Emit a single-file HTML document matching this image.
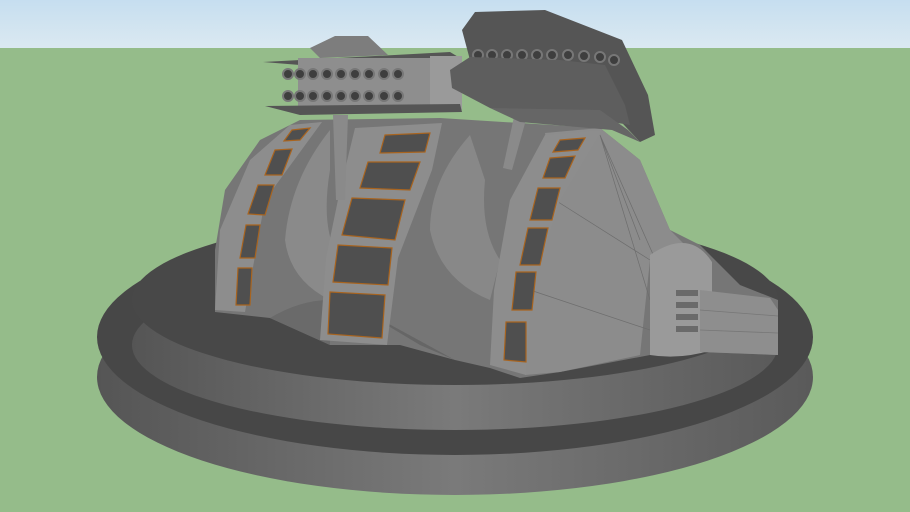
<!DOCTYPE html>
<html><head><style>html,body{margin:0;padding:0;width:910px;height:512px;overflow:hidden}</style></head><body>
<svg width="910" height="512" viewBox="0 0 910 512" xmlns="http://www.w3.org/2000/svg">
<defs>
<linearGradient id="sky" x1="0" y1="0" x2="0" y2="1"><stop offset="0" stop-color="#c6def0"/><stop offset="1" stop-color="#dbe9f1"/></linearGradient>
<linearGradient id="side" x1="0" y1="0" x2="1" y2="0"><stop offset="0" stop-color="#555"/><stop offset=".5" stop-color="#7a7a7a"/><stop offset="1" stop-color="#5a5a5a"/></linearGradient>
</defs>
<rect width="910" height="49" fill="url(#sky)"/>
<rect y="48" width="910" height="464" fill="#95bc8a"/>
<!-- base -->
<ellipse cx="455" cy="377" rx="358" ry="118" fill="url(#side)"/>
<ellipse cx="455" cy="337" rx="358" ry="118" fill="#474747"/>
<ellipse cx="455" cy="345" rx="323" ry="85" fill="url(#side)"/>
<ellipse cx="455" cy="300" rx="323" ry="85" fill="#484848"/>
<!-- body silhouette -->
<polygon points="215,250 225,190 260,140 300,120 440,118 520,123 600,128 640,160 670,230 700,245 740,285 778,300 778,355 700,352 650,355 560,372 520,378 490,368 455,360 400,345 330,345 270,318 215,312" fill="#767676"/>
<!-- arch bulges -->
<path d="M330,130 Q290,180 285,240 Q290,280 330,300 L340,260 Q320,230 330,170 Z" fill="#8a8a8a"/>
<path d="M470,135 Q430,180 430,230 Q440,280 490,300 L500,260 Q480,230 485,180 Z" fill="#888"/>
<path d="M345,300 Q400,330 455,360 L420,345 Z" fill="#666"/>
<path d="M270,318 Q300,300 330,300 L330,345 Z" fill="#6a6a6a"/>
<!-- right cone -->
<polygon points="545,133 600,128 640,160 670,230 690,250 650,260 640,355 560,372 525,375 530,290 555,200" fill="#8c8c8c"/>
<path d="M600,135 L650,300 M600,135 L640,240 M600,135 L660,270 M555,200 L650,260 M530,290 L650,330" stroke="#6d6d6d" stroke-width="0.7" fill="none"/>
<!-- nozzle -->
<path d="M650,255 Q690,228 712,262 L712,350 Q680,360 650,355 Z" fill="#9a9a9a"/>
<polygon points="700,290 770,298 778,310 778,355 700,352" fill="#8e8e8e"/>
<path d="M700,310 L778,316 M700,330 L778,333" stroke="#777" stroke-width="0.8"/>
<g fill="#6a6a6a"><rect x="676" y="290" width="22" height="6"/><rect x="676" y="302" width="22" height="6"/><rect x="676" y="314" width="22" height="6"/><rect x="676" y="326" width="22" height="6"/></g>
<!-- left frame -->
<polygon points="290,125 322,122 265,200 245,312 215,310 220,230 250,160" fill="#8d8d8d"/>
<g fill="#4f4f4f" stroke="#a8641f" stroke-width="1.2">
<polygon points="292,130 310,128 300,140 284,141"/><polygon points="275,150 292,149 282,175 265,175"/><polygon points="258,185 274,185 265,215 248,214"/><polygon points="246,225 260,225 255,258 240,258"/><polygon points="238,268 252,268 250,305 236,305"/>
</g>
<!-- middle frame -->
<polygon points="355,128 442,123 432,170 398,258 387,345 320,340 326,258 340,190" fill="#8d8d8d"/>
<g fill="#4f4f4f" stroke="#a8641f" stroke-width="1.2">
<polygon points="385,135 430,133 425,152 380,153"/><polygon points="368,162 420,162 410,190 360,188"/><polygon points="352,198 405,200 395,240 342,235"/><polygon points="338,245 392,248 388,285 333,282"/><polygon points="330,292 385,295 382,338 328,334"/>
</g>
<!-- right frame -->
<polygon points="545,135 602,130 560,200 532,290 526,375 490,365 494,290 510,200" fill="#8d8d8d"/>
<g fill="#4f4f4f" stroke="#a8641f" stroke-width="1.2">
<polygon points="560,140 585,138 578,150 553,152"/><polygon points="550,158 575,156 565,178 543,178"/><polygon points="538,188 560,188 552,220 530,220"/><polygon points="528,228 548,228 540,265 520,265"/><polygon points="516,272 536,272 532,310 512,310"/><polygon points="506,322 526,322 526,362 504,360"/>
</g>
<!-- struts -->
<polygon points="333,115 348,115 345,200 336,200" fill="#8a8a8a"/>
<polygon points="518,98 532,98 512,170 503,168" fill="#8a8a8a"/>
<!-- left missile pod -->
<polygon points="310,48 335,36 368,36 388,55 320,58" fill="#7d7d7d"/>
<polygon points="263,62 450,52 460,58 300,65" fill="#555"/>
<rect x="298" y="58" width="160" height="52" fill="#8e8e8e"/>
<polygon points="430,56 462,56 462,110 430,110" fill="#9a9a9a"/>
<g fill="#3e3e3e" stroke="#777" stroke-width="2">
<circle cx="288" cy="74" r="5"/><circle cx="300" cy="74" r="5"/><circle cx="313" cy="74" r="5"/><circle cx="327" cy="74" r="5"/><circle cx="341" cy="74" r="5"/><circle cx="355" cy="74" r="5"/><circle cx="369" cy="74" r="5"/><circle cx="384" cy="74" r="5"/><circle cx="398" cy="74" r="5"/>
<circle cx="288" cy="96" r="5"/><circle cx="300" cy="96" r="5"/><circle cx="313" cy="96" r="5"/><circle cx="327" cy="96" r="5"/><circle cx="341" cy="96" r="5"/><circle cx="355" cy="96" r="5"/><circle cx="369" cy="96" r="5"/><circle cx="384" cy="96" r="5"/><circle cx="398" cy="96" r="5"/>
</g>
<polygon points="265,106 460,104 462,112 300,115" fill="#555"/>
<!-- right pod -->
<polygon points="462,30 475,12 545,10 622,40 648,95 655,135 640,142 610,110 470,60" fill="#555"/>
<g fill="#3e3e3e" stroke="#777" stroke-width="2">
<circle cx="478" cy="55" r="5"/><circle cx="492" cy="55" r="5"/><circle cx="507" cy="55" r="5"/><circle cx="522" cy="55" r="5"/><circle cx="537" cy="55" r="5"/><circle cx="552" cy="55" r="5"/><circle cx="568" cy="55" r="5"/><circle cx="584" cy="56" r="5"/><circle cx="600" cy="57" r="5"/><circle cx="614" cy="60" r="5"/>
</g>
<polygon points="450,70 470,57 560,60 605,65 625,105 630,125 612,122 490,108 452,88" fill="#5e5e5e"/>
<polygon points="490,108 600,110 628,130 640,142 612,130 520,122" fill="#666"/>
</svg>
</body></html>
